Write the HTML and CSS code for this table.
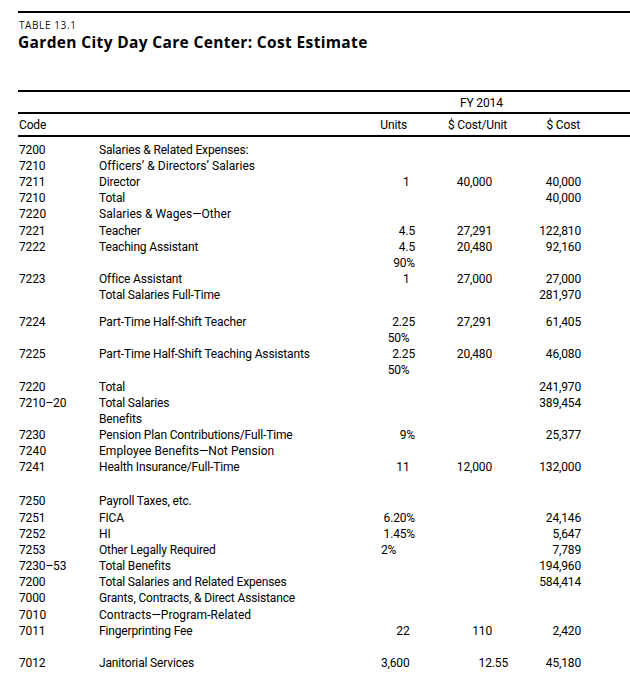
FILE: index.html
```html
<!DOCTYPE html>
<html lang="en">
<head>
<meta charset="utf-8">
<title>Table 13.1 Garden City Day Care Center: Cost Estimate</title>
<link rel="stylesheet" href="styles.css">
</head>
<body>
<div class="page">
  <div class="rule rule-top"></div>
  <div class="caption">TABLE 13.1</div>
  <h1 class="title">Garden City Day Care Center: Cost Estimate</h1>
  <div class="rule rule-head"></div>
  <div class="row fy-row"><span></span><span></span><span></span><span class="fy">FY 2014</span><span></span></div>
  <div class="rule"></div>
  <div class="row head-row"><span>Code</span><span></span><span class="h-units">Units</span><span class="h-cpu">$ Cost/Unit</span><span class="h-cost">$ Cost</span></div>
  <div class="rule"></div>
  <div class="tbody">
    <div class="row first"><span>7200</span><span>Salaries &amp; Related Expenses:</span><span></span><span></span><span></span></div>
    <div class="row"><span>7210</span><span class="spaced">Officers’ &amp; Directors’ Salaries</span><span></span><span></span><span></span></div>
    <div class="row"><span>7211</span><span>Director</span><span class="u-in">1</span><span>40,000</span><span>40,000</span></div>
    <div class="row"><span>7210</span><span>Total</span><span></span><span></span><span>40,000</span></div>
    <div class="row"><span class="spaced">7220</span><span class="spaced">Salaries &amp; Wages—Other</span><span></span><span></span><span></span></div>
    <div class="row"><span>7221</span><span>Teacher</span><span>4.5</span><span>27,291</span><span>122,810</span></div>
    <div class="row"><span>7222</span><span>Teaching Assistant</span><span>4.5</span><span>20,480</span><span>92,160</span></div>
    <div class="row"><span></span><span></span><span>90%</span><span></span><span></span></div>
    <div class="row"><span>7223</span><span>Office Assistant</span><span class="u-in">1</span><span>27,000</span><span>27,000</span></div>
    <div class="row"><span></span><span>Total Salaries Full-Time</span><span></span><span></span><span>281,970</span></div>

    <div class="row gap-a"><span>7224</span><span>Part-Time Half-Shift Teacher</span><span>2.25</span><span>27,291</span><span>61,405</span></div>
    <div class="row"><span></span><span></span><span class="u-in">50%</span><span></span><span></span></div>
    <div class="row"><span>7225</span><span>Part-Time Half-Shift Teaching Assistants</span><span>2.25</span><span>20,480</span><span>46,080</span></div>
    <div class="row"><span></span><span></span><span class="u-in">50%</span><span></span><span></span></div>
    <div class="row"><span>7220</span><span>Total</span><span></span><span></span><span>241,970</span></div>
    <div class="row"><span>7210–20</span><span>Total Salaries</span><span></span><span></span><span>389,454</span></div>
    <div class="row"><span></span><span>Benefits</span><span></span><span></span><span></span></div>
    <div class="row"><span>7230</span><span>Pension Plan Contributions/Full-Time</span><span>9%</span><span></span><span>25,377</span></div>
    <div class="row"><span class="spaced">7240</span><span class="spaced">Employee Benefits—Not Pension</span><span></span><span></span><span></span></div>
    <div class="row"><span>7241</span><span>Health Insurance/Full-Time</span><span class="u-in">11</span><span>12,000</span><span>132,000</span></div>

    <div class="row gap-b"><span>7250</span><span>Payroll Taxes, etc.</span><span></span><span></span><span></span></div>
    <div class="row"><span>7251</span><span>FICA</span><span>6.20%</span><span></span><span>24,146</span></div>
    <div class="row"><span>7252</span><span>HI</span><span>1.45%</span><span></span><span>5,647</span></div>
    <div class="row"><span>7253</span><span>Other Legally Required</span><span class="u-left">2%</span><span></span><span>7,789</span></div>
    <div class="row"><span>7230–53</span><span>Total Benefits</span><span></span><span></span><span>194,960</span></div>
    <div class="row"><span>7200</span><span>Total Salaries and Related Expenses</span><span></span><span></span><span>584,414</span></div>
    <div class="row"><span>7000</span><span>Grants, Contracts, &amp; Direct Assistance</span><span></span><span></span><span></span></div>
    <div class="row"><span class="spaced">7010</span><span class="spaced">Contracts—Program-Related</span><span></span><span></span><span></span></div>
    <div class="row"><span>7011</span><span>Fingerprinting Fee</span><span class="u-in">22</span><span>110</span><span>2,420</span></div>

    <div class="row gap-c"><span>7012</span><span>Janitorial Services</span><span class="u-in">3,600</span><span class="flush">12.55</span><span>45,180</span></div>
  </div>
</div>
</body>
</html>
```

FILE: styles.css
```css
html, body {
  margin: 0;
  padding: 0;
  background: #fff;
}

.page {
  margin-left: 18px;
  padding-top: 11px;
  color: #000;
}

.rule {
  height: 2px;
  background: #000;
}

.caption {
  font-family: "Open Sans", sans-serif;
  font-size: 10px;
  line-height: 12px;
  letter-spacing: 0.6px;
  margin-top: 6px;
  padding-left: 1px;
  color: #111;
}

.title {
  font-family: "Open Sans", sans-serif;
  font-weight: 700;
  font-size: 15.5px;
  line-height: 18px;
  letter-spacing: 0.35px;
  margin: 2px 0 0 0;
  color: #000;
}

.rule-head {
  margin-top: 39px;
}

.row {
  display: grid;
  grid-template-columns: 81px 250px 66px 93px 73px;
  font-family: Roboto, "Liberation Sans", sans-serif;
  font-size: 12px;
  line-height: 16.15px;
  letter-spacing: -0.15px;
  color: #000;
  white-space: nowrap;
}

.row > span:nth-child(1) {
  padding-left: 1px;
}

.row > span:nth-child(3) {
  text-align: right;
}

.row > span:nth-child(4) {
  text-align: right;
  padding-right: 16px;
}

.row > span:nth-child(5) {
  text-align: right;
}

.fy-row {
  height: 20px;
  padding-top: 2.6px;
  box-sizing: border-box;
}

.row > span.fy {
  text-align: left;
  padding-left: 45px;
  padding-right: 0;
}

.head-row {
  height: 21px;
  padding-top: 2.85px;
  box-sizing: border-box;
}

.row > span.h-units {
  padding-right: 8px;
}

.row > span.h-cpu {
  padding-right: 1px;
}

.row > span.h-cost {
  padding-right: 1px;
}

.tbody {
  padding-top: 4.85px;
}

.spaced {
  letter-spacing: 0.05px;
}

.row > span.u-in {
  padding-right: 5.5px;
}

.row > span.u-left {
  text-align: left;
  padding-left: 32px;
}

.row > span.flush {
  padding-right: 0;
}

.gap-a {
  margin-top: 10.5px;
}

.gap-b {
  margin-top: 18px;
}

.gap-c {
  margin-top: 16px;
}
```
